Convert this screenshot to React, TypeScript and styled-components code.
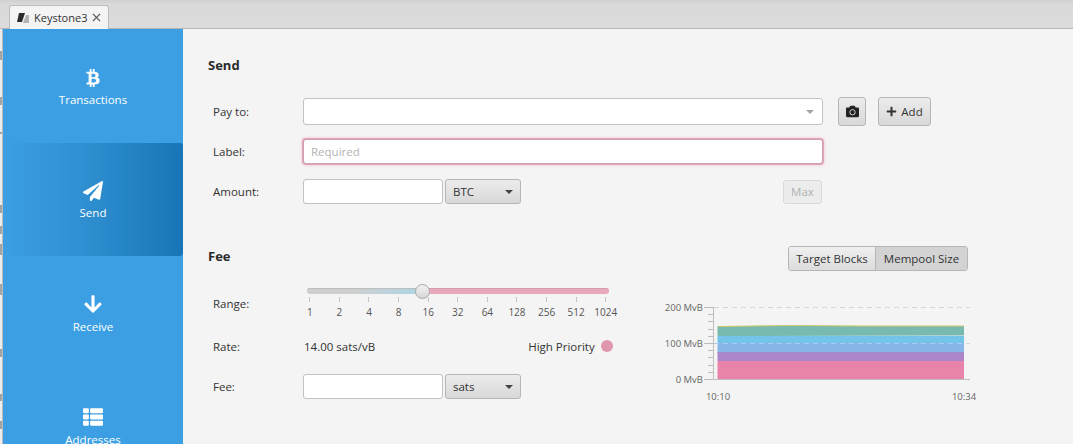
import React from 'react';
import styled, { createGlobalStyle } from 'styled-components';
import { FaBtc, FaPaperPlane, FaArrowDown, FaThList, FaCamera, FaPlus } from 'react-icons/fa';

const FONT = '"Open Sans", "Noto Sans", sans-serif';

const nav = [
  { label: 'Transactions', icon: <FaBtc size={18} /> },
  { label: 'Send', icon: <FaPaperPlane size={20} />, active: true },
  { label: 'Receive', icon: <FaArrowDown size={20} /> },
  { label: 'Addresses', icon: <FaThList size={20} /> },
];

const ticks = ['1', '2', '4', '8', '16', '32', '64', '128', '256', '512', '1024'];

// bits of the window behind that stick out along the left edge
const behind = [
  [22, 9], [68, 8], [103, 2], [176, 8], [197, 8], [215, 11], [255, 11], [320, 8], [365, 7], [392, 8],
];

const App: React.FC = () => {
  return (
    <Window>
      <GlobalStyle />
      <TabBar>
        <Tab>
          <TabLogo viewBox="0 0 12 12">
            <path d="M2 1h6l-3 9H0z" fill="#2b2b2b" />
            <path d="M9 3h3v8H6z" fill="#b4b4b4" />
          </TabLogo>
          <TabTitle>Keystone3</TabTitle>
          <TabClose viewBox="0 0 10 10">
            <path d="M1 1l8 8M9 1l-8 8" />
          </TabClose>
        </Tab>
      </TabBar>
      <Body>
        <Gutter>
          {behind.map(([top, height]) => (
            <GutterMark key={top} $top={top} $height={height} />
          ))}
        </Gutter>
        <Sidebar>
          {nav.map(item => (
            <NavItem key={item.label} $active={item.active}>
              <NavIcon>{item.icon}</NavIcon>
              <NavLabel>{item.label}</NavLabel>
            </NavItem>
          ))}
        </Sidebar>
        <Main>
          <Heading>Send</Heading>
          <SendForm>
            <Row>
              <RowLabel>Pay to:</RowLabel>
              <AddressBox>
                <Caret $light />
              </AddressBox>
              <IconButton>
                <FaCamera size={13} />
              </IconButton>
              <AddButton>
                <FaPlus size={11} />
                Add
              </AddButton>
            </Row>
            <Row>
              <RowLabel>Label:</RowLabel>
              <RequiredInput placeholder="Required" />
            </Row>
            <Row>
              <RowLabel>Amount:</RowLabel>
              <ValueInput />
              <Combo>
                BTC
                <Caret />
              </Combo>
              <MaxButton>Max</MaxButton>
            </Row>
          </SendForm>
          <FeeHeader>
            <FeeHeading>Fee</FeeHeading>
            <Toggle>
              <ToggleItem>Target Blocks</ToggleItem>
              <ToggleItem $selected>Mempool Size</ToggleItem>
            </Toggle>
          </FeeHeader>
          <FeeGrid>
            <FeeForm>
              <RangeRow>
                <RowLabel>Range:</RowLabel>
                <Slider>
                  <Track>
                    <TrackLeft />
                    <TrackRight />
                    <Thumb />
                  </Track>
                  <TickRow>
                    {ticks.map(t => (
                      <TickCell key={t}>
                        <TickMark />
                        <TickLabel>{t}</TickLabel>
                      </TickCell>
                    ))}
                  </TickRow>
                </Slider>
              </RangeRow>
              <RateRow>
                <RowLabel>Rate:</RowLabel>
                <RateValue>14.00 sats/vB</RateValue>
                <Priority>
                  High Priority
                  <PriorityDot />
                </Priority>
              </RateRow>
              <Row>
                <RowLabel>Fee:</RowLabel>
                <ValueInput />
                <Combo>
                  sats
                  <Caret />
                </Combo>
              </Row>
            </FeeForm>
            <MempoolChart />
          </FeeGrid>
        </Main>
      </Body>
    </Window>
  );
};

const MempoolChart: React.FC = () => {
  const minor = [314, 321, 329, 336, 350, 357, 365, 372];
  const top = 'L790 325.5L860 326L964 326';
  return (
    <Chart viewBox="650 290 340 120">
      <path d="M714 307.5H970M714 343.5H970" stroke="#d6d6d6" strokeDasharray="5 4" />
      <path d="M717.5 379V361H964V379Z" fill="#e884a9" />
      <path d="M717.5 361V352H964V361Z" fill="#ad86ca" />
      <path d="M717.5 352V343H964V352Z" fill="#88b6e8" />
      <path d="M717.5 343V336H964V343Z" fill="#74c3e9" />
      <path d={`M717.5 336V326.5${top}V335.5Z`} fill="#78bab0" />
      <path d={`M717.5 326.5${top}`} fill="none" stroke="#cfc86a" />
      <path d="M717.5 352.5H964" stroke="#9a8ccf" />
      <path d="M714 343.5H964" stroke="#a9cdf0" strokeDasharray="5 4" />
      <g stroke="#bdbdbd">
        <path d="M713.5 307V379.5H970" fill="none" />
        <path d="M704 307.5H713M704 343.5H713M704 379.5H713" />
        {minor.map(y => (
          <path key={y} d={`M708 ${y}.5H713`} />
        ))}
      </g>
      <g fontSize="9.5" fill="#666" textAnchor="end">
        <text x="703" y="311">200 MvB</text>
        <text x="703" y="347">100 MvB</text>
        <text x="703" y="383">0 MvB</text>
      </g>
      <g fontSize="9.5" fill="#666" textAnchor="middle">
        <text x="718" y="400">10:10</text>
        <text x="964" y="400">10:34</text>
      </g>
    </Chart>
  );
};

const GlobalStyle = createGlobalStyle`
  html, body {
    margin: 0;
    height: 100%;
    overflow: hidden;
    background: #f4f4f4;
  }
  * {
    box-sizing: border-box;
  }
`;

const Window = styled.div`
  width: 1073px;
  height: 444px;
  overflow: hidden;
  display: flex;
  flex-direction: column;
  font-family: ${FONT};
  font-size: 11.5px;
  color: #333;
`;

const TabBar = styled.div`
  height: 29px;
  flex: none;
  display: flex;
  align-items: flex-end;
  padding-left: 9px;
  background: linear-gradient(#cfcfcf 0, #d9d9d9 4px, #dcdcdc 100%);
  border-bottom: 1px solid #b4b4b4;
`;

const Tab = styled.div`
  width: 100px;
  height: 24px;
  margin-bottom: -1px;
  display: flex;
  align-items: center;
  padding-left: 7px;
  background: #f4f4f4;
  border: 1px solid #bcbcbc;
  border-bottom: none;
  border-radius: 3px 3px 0 0;
`;

const TabLogo = styled.svg`
  width: 12px;
  height: 12px;
  margin-right: 5px;
`;

const TabTitle = styled.span`
  color: #333;
  font-size: 11px;
`;

const TabClose = styled.svg`
  width: 9px;
  height: 9px;
  margin-left: 5px;
  fill: none;
  stroke: #555;
  stroke-width: 1.4;
`;

const Body = styled.div`
  flex: 1;
  display: flex;
  min-height: 0;
`;

const Gutter = styled.div`
  position: relative;
  width: 3px;
  flex: none;
  background: #ececec;
  border-right: 1px solid #bcbcbc;
`;

const GutterMark = styled.div<{ $top: number; $height: number }>`
  position: absolute;
  left: 0;
  top: ${props => props.$top}px;
  width: 2px;
  height: ${props => props.$height}px;
  background: #a4a4a4;
`;

const Sidebar = styled.div`
  width: 180px;
  flex: none;
  padding-top: 0.5px;
  background: #3c9fe3;
  color: #fff;
  overflow: hidden;
`;

const NavItem = styled.div<{ $active?: boolean }>`
  height: 113.25px;
  display: flex;
  flex-direction: column;
  align-items: center;
  padding-top: 37px;
  border-radius: 0 3px 3px 0;
  background: ${props => (props.$active ? 'linear-gradient(90deg, #3c9fe3 0%, #2f8fd0 45%, #1876b6 100%)' : 'transparent')};
`;

const NavIcon = styled.div`
  height: 22px;
  display: flex;
  align-items: center;
  justify-content: center;
`;

const NavLabel = styled.div`
  margin-top: 3.5px;
  font-size: 11.5px;
  line-height: 16px;
`;

const Main = styled.div`
  flex: 1;
  padding: 27px 0 0 25px;
  min-width: 0;
`;

const Heading = styled.div`
  font-size: 13px;
  font-weight: 700;
  line-height: 18px;
  color: #2b2b2b;
`;

const SendForm = styled.div`
  display: flex;
  flex-direction: column;
  margin-top: 25px;
  gap: 15px;
`;

const Row = styled.div`
  display: flex;
  align-items: center;
  height: 25px;
  padding-left: 5px;
`;

const RowLabel = styled.div`
  width: 90px;
  flex: none;
  color: #333;
`;

const AddressBox = styled.div`
  width: 520px;
  height: 27px;
  display: flex;
  align-items: center;
  justify-content: flex-end;
  padding-right: 8px;
  background: #fff;
  border: 1px solid #c2c2c2;
  border-radius: 3px;
`;

const Caret = styled.span<{ $light?: boolean }>`
  width: 0;
  height: 0;
  border-left: 4px solid transparent;
  border-right: 4px solid transparent;
  border-top: 4px solid ${props => (props.$light ? '#a6a6a6' : '#444')};
`;

const ButtonBase = styled.div`
  display: flex;
  align-items: center;
  justify-content: center;
  background: linear-gradient(#ececec, #d8d8d8);
  border: 1px solid #b6b6b6;
  border-radius: 3px;
  color: #333;
`;

const IconButton = styled(ButtonBase)`
  width: 28px;
  height: 29px;
  margin-left: 15px;
  color: #222;
`;

const AddButton = styled(ButtonBase)`
  width: 53px;
  height: 29px;
  margin-left: 12px;
  gap: 4px;
`;

const RequiredInput = styled.input`
  width: 520px;
  height: 25px;
  padding: 0 7px;
  font: inherit;
  color: #333;
  background: #fff;
  border: 1px solid #c9a3ae;
  border-radius: 3px;
  outline: none;
  box-shadow: 0 0 0 1px #e7a3b6, 0 0 3px 1px #f0b9c9;
  &::placeholder {
    color: #b4b4b4;
  }
`;

const ValueInput = styled.input`
  width: 140px;
  height: 25px;
  padding: 0 7px;
  font: inherit;
  background: #fff;
  border: 1px solid #c2c2c2;
  border-radius: 3px;
  outline: none;
`;

const Combo = styled(ButtonBase)`
  width: 76px;
  height: 25px;
  margin-left: 2px;
  justify-content: space-between;
  padding: 0 7px 0 7px;
`;

const MaxButton = styled(ButtonBase)`
  width: 39px;
  height: 24px;
  margin-left: 262px;
  color: #b0b0b0;
  background: #ececec;
  border-color: #dadada;
`;

const FeeHeader = styled.div`
  display: flex;
  align-items: flex-start;
  justify-content: space-between;
  width: 760px;
  margin-top: 42px;
`;

const FeeHeading = styled(Heading)`
  margin-top: 1px;
`;

const Toggle = styled.div`
  display: flex;
  height: 25px;
  border: 1px solid #b6b6b6;
  border-radius: 3px;
  overflow: hidden;
`;

const ToggleItem = styled.div<{ $selected?: boolean }>`
  display: flex;
  align-items: center;
  justify-content: center;
  width: ${props => (props.$selected ? '92px' : '86px')};
  color: #333;
  background: ${props => (props.$selected ? '#d3d3d3' : 'linear-gradient(#f0f0f0, #dcdcdc)')};
  border-left: ${props => (props.$selected ? '1px solid #b6b6b6' : 'none')};
`;

const FeeGrid = styled.div`
  display: flex;
  align-items: flex-start;
  margin-top: 6px;
`;

const FeeForm = styled.div`
  width: 442px;
  display: flex;
  flex-direction: column;
`;

const RangeRow = styled.div`
  display: flex;
  align-items: center;
  padding-left: 5px;
  height: 52px;
`;

const Slider = styled.div`
  width: 314px;
  margin-left: 4px;
  flex: none;
`;

const Track = styled.div`
  position: relative;
  display: flex;
  height: 6px;
  width: 302px;
  border-radius: 3px;
  overflow: visible;
`;

const TrackLeft = styled.div`
  width: 115px;
  border-radius: 3px 0 0 3px;
  background: linear-gradient(90deg, #cfcfcf 0%, #cfcfcf 40%, #abd6e6 100%);
  box-shadow: inset 0 1px 0 #bdbdbd;
`;

const TrackRight = styled.div`
  flex: 1;
  border-radius: 0 3px 3px 0;
  background: #e8a9ba;
  box-shadow: inset 0 1px 0 #d79aac;
`;

const Thumb = styled.div`
  position: absolute;
  left: 108px;
  top: -4px;
  width: 15px;
  height: 15px;
  border-radius: 50%;
  background: linear-gradient(#f2f2f2, #d6d6d6);
  border: 1px solid #a8a8a8;
`;

const TickRow = styled.div`
  display: flex;
  margin-top: 3px;
  margin-left: -12px;
`;

const TickCell = styled.div`
  width: 29.6px;
  flex: none;
  display: flex;
  flex-direction: column;
  align-items: center;
`;

const TickMark = styled.div`
  width: 1px;
  height: 5px;
  background: #c4c4c4;
`;

const TickLabel = styled.div`
  margin-top: 3px;
  font-size: 10px;
  line-height: 14px;
  color: #555;
  white-space: nowrap;
`;

const RateRow = styled.div`
  display: flex;
  align-items: center;
  padding-left: 5px;
  height: 20px;
  margin-top: 7px;
  margin-bottom: 18px;
`;

const RateValue = styled.div`
  margin-left: 1px;
  color: #333;
`;

const Priority = styled.div`
  display: flex;
  align-items: center;
  gap: 6px;
  margin-left: 153px;
  color: #333;
`;

const PriorityDot = styled.div`
  width: 12px;
  height: 12px;
  border-radius: 50%;
  background: #e096ac;
`;

const Chart = styled.svg`
  width: 340px;
  height: 120px;
  flex: none;
  margin-top: 13px;
  font-family: ${FONT};
`;

export default App;
